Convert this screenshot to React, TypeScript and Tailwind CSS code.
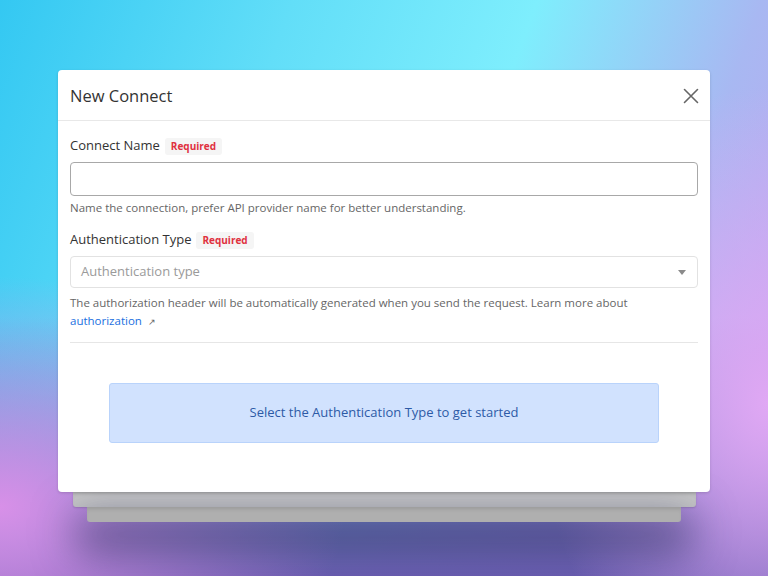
import React from "react";

export default function App() {
  return (
    <div
      className="relative w-[768px] h-[576px] overflow-hidden flex flex-col items-center pt-[70px] bg-[radial-gradient(ellipse_45%_40%_at_0%_88%,#d890e8_0%,rgba(216,144,232,0)_100%),radial-gradient(ellipse_30%_55%_at_100%_70%,#e0a8f4_0%,rgba(224,168,244,0)_100%),linear-gradient(180deg,rgba(0,0,0,0)_55%,#6c5fb4_100%),linear-gradient(110deg,#34c8f2_0%,#62def8_30%,#7eeefd_55%,#a8b8f2_78%,#c4a2ee_100%)]"
      style={{ fontFamily: '"Open Sans", "Liberation Sans", sans-serif' }}
    >
      <div className="relative z-10 w-[652px] h-[422px] bg-white rounded-[4px] flex flex-col shadow-[0_1px_3px_rgba(0,0,0,0.15)]">
        <div className="h-[51px] flex items-center justify-between pl-3 pr-[11px] pt-[2px] border-b border-[#e8e8e8]">
          <span className="text-[16.5px] text-[#333333] leading-none">New Connect</span>
          <svg width="16" height="16" viewBox="0 0 16 16" className="text-[#666666]">
            <path d="M1.5 1.5 L14.5 14.5 M14.5 1.5 L1.5 14.5" stroke="currentColor" strokeWidth="1.6" strokeLinecap="round" />
          </svg>
        </div>
        <div className="flex flex-col px-3 pt-[15px]">
          <div className="flex items-center gap-[5px] h-[20px]">
            <span className="text-[13px] text-[#333333]">Connect Name</span>
            <span className="text-[10px] font-bold text-[#e0313f] bg-[#f5f5f5] rounded-[3px] px-[6px] h-[17px] flex items-center">Required</span>
          </div>
          <div className="mt-[6px] h-[34px] border border-[#a8a8a8] rounded-[4px]" />
          <div className="mt-[4px] text-[11.5px] text-[#666666] leading-[16px]">
            Name the connection, prefer API provider name for better understanding.
          </div>
          <div className="flex items-center gap-[5px] h-[20px] mt-[14px]">
            <span className="text-[13px] text-[#333333]">Authentication Type</span>
            <span className="text-[10px] font-bold text-[#e0313f] bg-[#f5f5f5] rounded-[3px] px-[6px] h-[17px] flex items-center">Required</span>
          </div>
          <div className="mt-[6px] h-[32px] border border-[#e2e2e2] rounded-[4px] flex items-center justify-between pl-[10px] pr-[11px]">
            <span className="text-[13px] text-[#9a9a9a]">Authentication type</span>
            <svg width="8" height="5" viewBox="0 0 8 5">
              <path d="M0 0 L8 0 L4 5 Z" fill="#8a8a8a" />
            </svg>
          </div>
          <div className="mt-[6px] text-[11.5px] text-[#666666] leading-[18px]">
            The authorization header will be automatically generated when you send the request. Learn more about
            <br />
            <span className="text-[#1a6fe0]">authorization</span>
            <span className="text-[#666666] text-[9px] ml-[6px]">↗</span>
          </div>
          <div className="mt-[11px] h-px bg-[#e6e6e6]" />
          <div className="mt-[40px] mx-[39px] h-[60px] bg-[#d1e2fe] border border-[#b9d3fb] rounded-[3px] flex items-center justify-center">
            <span className="text-[13px] text-[#2d5aa6]">Select the Authentication Type to get started</span>
          </div>
        </div>
      </div>
      <div className="w-[623px] h-[15px] bg-[#c9c9c9] rounded-b-[3px] shadow-[inset_0_4px_4px_-2px_rgba(0,0,0,0.12),0_1px_2px_rgba(0,0,0,0.15)]" />
      <div className="w-[594px] h-[15px] bg-[#afafaf] rounded-b-[3px] shadow-[inset_0_4px_4px_-2px_rgba(0,0,0,0.12),0_20px_40px_12px_rgba(40,45,90,0.55)]" />
    </div>
  );
}
